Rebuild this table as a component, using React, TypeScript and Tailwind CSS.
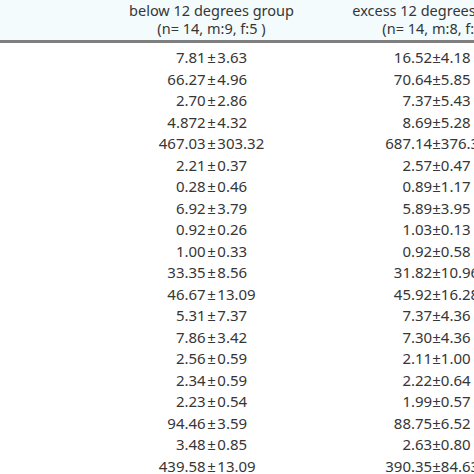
const rows: [string, string, string, string][] = [
  ["7.81", "3.63", "16.52", "4.18"],
  ["66.27", "4.96", "70.64", "5.85"],
  ["2.70", "2.86", "7.37", "5.43"],
  ["4.872", "4.32", "8.69", "5.28"],
  ["467.03", "303.32", "687.14", "376.38"],
  ["2.21", "0.37", "2.57", "0.47"],
  ["0.28", "0.46", "0.89", "1.17"],
  ["6.92", "3.79", "5.89", "3.95"],
  ["0.92", "0.26", "1.03", "0.13"],
  ["1.00", "0.33", "0.92", "0.58"],
  ["33.35", "8.56", "31.82", "10.96"],
  ["46.67", "13.09", "45.92", "16.28"],
  ["5.31", "7.37", "7.37", "4.36"],
  ["7.86", "3.42", "7.30", "4.36"],
  ["2.56", "0.59", "2.11", "1.00"],
  ["2.34", "0.59", "2.22", "0.64"],
  ["2.23", "0.54", "1.99", "0.57"],
  ["94.46", "3.59", "88.75", "6.52"],
  ["3.48", "0.85", "2.63", "0.80"],
  ["439.58", "13.09", "390.35", "84.63"],
];

function Value({ mean, sd, loose }: { mean: string; sd: string; loose?: boolean }) {
  return (
    <div className="grid grid-cols-[1fr_auto_1fr] items-center">
      <span className="text-right">{mean}</span>
      <span className={loose ? "px-[1.5px]" : ""}>±</span>
      <span className="text-left">{sd}</span>
    </div>
  );
}

export default function App() {
  return (
    <div
      className="w-[474px] h-[474px] overflow-hidden bg-white text-[#363636]"
      style={{ fontFamily: '"Noto Sans", "Noto Sans CJK KR", sans-serif' }}
    >
      <div className="w-[560px]">
        <div className="bg-[#f3fbfc] h-[40px] pt-[1px] grid grid-cols-[99px_225px_225px] text-[14.5px] leading-[18px] text-center">
          <div></div>
          <div>
            <div>below 12 degrees group</div>
            <div>(n= 14, m:9, f:5 )</div>
          </div>
          <div>
            <div>excess 12 degrees group</div>
            <div>(n= 14, m:8, f:6 )</div>
          </div>
        </div>
        <div className="h-[3px] bg-[#7f7f7f]"></div>
        <div className="pt-[3px] text-[15px]">
          {rows.map((r, i) => (
            <div key={i} className="grid grid-cols-[99px_225px_225px] h-[21.5px] items-center">
              <div></div>
              <Value mean={r[0]} sd={r[1]} loose />
              <Value mean={r[2]} sd={r[3]} />
            </div>
          ))}
        </div>
      </div>
    </div>
  );
}
